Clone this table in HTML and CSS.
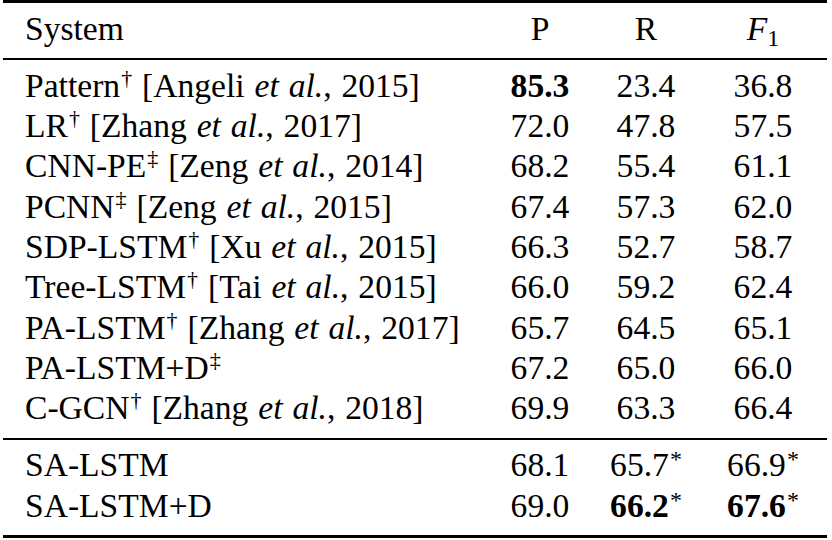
FILE: index.html
```html
<!DOCTYPE html>
<html lang="en">
<head>
    <meta charset="UTF-8">
    <title>Results</title>
    <link rel="stylesheet" href="styles.css">
</head>
<body>
    <table class="results">
        <colgroup>
            <col class="col-system">
            <col class="col-num">
            <col class="col-num">
            <col class="col-f1">
        </colgroup>
        <thead>
            <tr>
                <th class="system">System</th>
                <th>P</th>
                <th>R</th>
                <th><i>F</i><sub>1</sub></th>
            </tr>
        </thead>
        <tbody class="baselines">
            <tr class="first"><td class="system">Pattern<sup>&dagger;</sup> [Angeli <i>et al.</i>, 2015]</td><td><b>85.3</b></td><td>23.4</td><td>36.8</td></tr>
            <tr><td class="system">LR<sup>&dagger;</sup> [Zhang <i>et al.</i>, 2017]</td><td>72.0</td><td>47.8</td><td>57.5</td></tr>
            <tr><td class="system">CNN-PE<sup>&Dagger;</sup> [Zeng <i>et al.</i>, 2014]</td><td>68.2</td><td>55.4</td><td>61.1</td></tr>
            <tr><td class="system">PCNN<sup>&Dagger;</sup> [Zeng <i>et al.</i>, 2015]</td><td>67.4</td><td>57.3</td><td>62.0</td></tr>
            <tr><td class="system">SDP-LSTM<sup>&dagger;</sup> [Xu <i>et al.</i>, 2015]</td><td>66.3</td><td>52.7</td><td>58.7</td></tr>
            <tr><td class="system">Tree-LSTM<sup>&dagger;</sup> [Tai <i>et al.</i>, 2015]</td><td>66.0</td><td>59.2</td><td>62.4</td></tr>
            <tr><td class="system">PA-LSTM<sup>&dagger;</sup> [Zhang <i>et al.</i>, 2017]</td><td>65.7</td><td>64.5</td><td>65.1</td></tr>
            <tr><td class="system">PA-LSTM+D<sup>&Dagger;</sup></td><td>67.2</td><td>65.0</td><td>66.0</td></tr>
            <tr class="last"><td class="system">C-GCN<sup>&dagger;</sup> [Zhang <i>et al.</i>, 2018]</td><td>69.9</td><td>63.3</td><td>66.4</td></tr>
        </tbody>
        <tbody class="ours">
            <tr class="first"><td class="system">SA-LSTM</td><td>68.1</td><td>65.7<sup class="star">*</sup></td><td>66.9<sup class="star">*</sup></td></tr>
            <tr class="last"><td class="system">SA-LSTM+D</td><td>69.0</td><td><b>66.2</b><sup class="star">*</sup></td><td><b>67.6</b><sup class="star">*</sup></td></tr>
        </tbody>
    </table>
</body>
</html>
```

FILE: styles.css
```css
body {
    margin: 0;
    padding: 0;
    background-color: white;
    color: black;
    font-family: "Liberation Serif", "Times New Roman", serif;
}
.results {
    border-collapse: collapse;
    width: 824px;
    margin-left: 3px;
    font-size: 33.6px;
    border-top: 3px solid black;
    border-bottom: 3px solid black;
}
.col-system {
    width: 484px;
}
.col-num {
    width: 106px;
}
.col-f1 {
    width: 128px;
}
th, td {
    padding: 0;
    height: 40.3px;
    line-height: 40.3px;
    text-align: center;
    font-weight: normal;
    white-space: nowrap;
}
th.system, td.system {
    text-align: left;
    padding-left: 22px;
    word-spacing: 1.5px;
}
thead th {
    padding-top: 5.8px;
    padding-bottom: 8.9px;
    border-bottom: 2px solid black;
}
.ours {
    border-top: 2px solid black;
}
.baselines tr.first td {
    padding-top: 5.9px;
}
.baselines tr.last td {
    padding-bottom: 9.2px;
}
.ours tr.first td {
    padding-top: 5.5px;
}
.ours tr.last td {
    padding-bottom: 8.9px;
}
sup {
    font-size: 22px;
    line-height: 0;
    vertical-align: 12px;
    margin-left: 1px;
}
sup.star {
    font-size: 24px;
    vertical-align: 9px;
}
sub {
    font-size: 24px;
    line-height: 0;
    vertical-align: -6px;
}
b {
    font-weight: bold;
}
```
